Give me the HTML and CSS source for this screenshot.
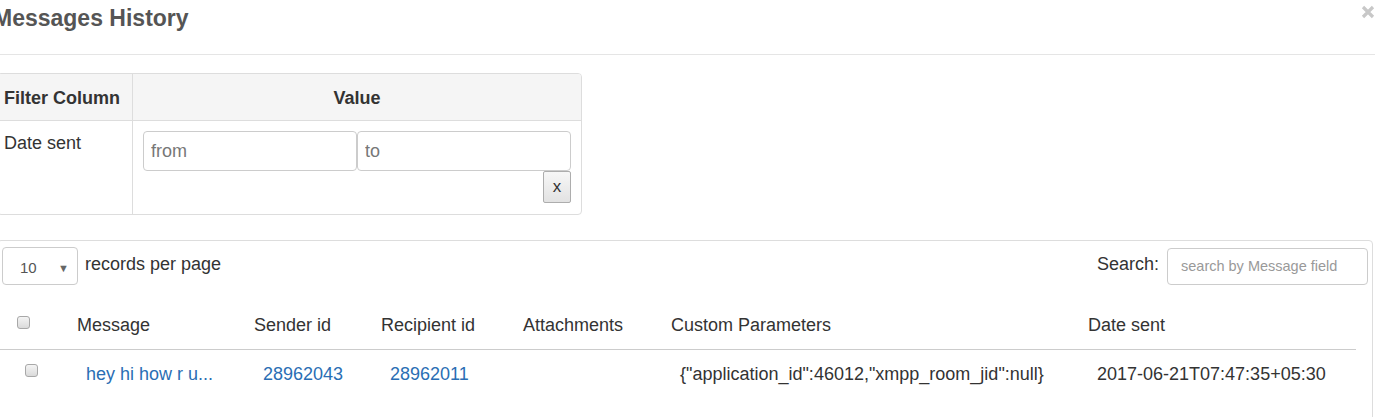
FILE: index.html
```html
<!DOCTYPE html>
<html>
<head>
<meta charset="utf-8">
<title>Messages History</title>
<link rel="stylesheet" href="styles.css">
</head>
<body>
<div class="modal">
  <div class="modal-header">
    <h4 class="modal-title">Messages History</h4>
    <button class="close" aria-label="Close"><svg width="14" height="14" viewBox="0 0 14 14"><path d="M2 2 L12 12 M12 2 L2 12" stroke="#c8c8c8" stroke-width="3.2" stroke-linecap="butt"/></svg></button>
  </div>
  <div class="modal-body">
    <div class="filter">
      <div class="frow fhead">
        <div class="fc c1">Filter Column</div>
        <div class="fc c2 center">Value</div>
      </div>
      <div class="frow fbody">
        <div class="fc c1 label">Date sent</div>
        <div class="fc c2 controls">
          <div class="inputs">
            <input class="finput" type="text" placeholder="from">
            <input class="finput" type="text" placeholder="to">
          </div>
          <div class="btnrow"><button class="xbtn">x</button></div>
        </div>
      </div>
    </div>

    <div class="panel">
      <div class="toolbar">
        <div class="length">
          <div class="select"><span class="sval">10</span><span class="sarrow">▼</span></div>
          <span class="ltext">records per page</span>
        </div>
        <div class="search">
          <span class="stext">Search:</span>
          <input class="sinput" type="text" placeholder="search by Message field">
        </div>
      </div>
      <div class="table">
        <div class="trow thead">
          <div class="cell cbcell"><span class="cb"></span></div>
          <div class="cell">Message</div>
          <div class="cell">Sender id</div>
          <div class="cell">Recipient id</div>
          <div class="cell">Attachments</div>
          <div class="cell">Custom Parameters</div>
          <div class="cell">Date sent</div>
        </div>
        <div class="trow tbody">
          <div class="cell cbcell"><span class="cb"></span></div>
          <div class="cell"><a class="link" href="#">hey hi how r u...</a></div>
          <div class="cell"><a class="link" href="#">28962043</a></div>
          <div class="cell"><a class="link" href="#">28962011</a></div>
          <div class="cell"></div>
          <div class="cell">{"application_id":46012,"xmpp_room_jid":null}</div>
          <div class="cell">2017-06-21T07:47:35+05:30</div>
        </div>
      </div>
    </div>
  </div>
</div>
</body>
</html>
```
FILE: styles.css
```css
* { box-sizing: border-box; }
html, body { margin: 0; padding: 0; overflow: hidden; background: #fff; }
body {
  font-family: "Liberation Sans", Arial, sans-serif;
  font-size: 18px;
  color: #333;
  width: 1375px;
  height: 417px;
}
.modal {
  position: relative;
  margin-left: -18px;
  width: 1405px;
}
.modal-header {
  position: relative;
  height: 55px;
  padding: 6px 15px 0 11px;
  border-bottom: 1px solid #e5e5e5;
}
.modal-title {
  margin: 0;
  font-size: 23px;
  line-height: 25px;
  font-weight: bold;
  color: #555;
}
.close {
  position: absolute;
  top: 5px;
  left: 1379px;
  width: 14px;
  height: 14px;
  padding: 0;
  border: 0;
  background: transparent;
  display: block;
}
.close svg { display: block; }
.modal-body {
  padding: 18px 15px 0 15px;
}
.filter {
  width: 585px;
  border: 1px solid #ddd;
  border-radius: 4px;
  overflow: hidden;
}
.frow { display: flex; }
.fhead {
  height: 47px;
  background: #f5f5f5;
  border-bottom: 1px solid #ddd;
  font-weight: bold;
  align-items: stretch;
}
.fc { line-height: 22px; }
.c1 { width: 135px; border-right: 1px solid #ddd; padding-left: 6px; }
.c2 { flex: 1; }
.fhead .fc { display: flex; align-items: center; padding-top: 1px; }
.fhead .center { justify-content: center; }
.fbody { height: 93px; }
.label { padding-top: 11px; }
.controls { padding: 10px 10px 0 10px; }
.inputs { display: flex; }
.finput {
  width: 214px;
  height: 40px;
  border: 1px solid #ccc;
  border-radius: 4px;
  padding: 0 7px;
  font-family: "Liberation Sans", Arial, sans-serif;
  font-size: 18px;
  color: #555;
  outline: none;
}
.finput::placeholder { color: #777; }
.btnrow { display: flex; justify-content: flex-end; }
.xbtn {
  width: 28px;
  height: 32px;
  padding: 0;
  border: 1px solid #adadad;
  border-radius: 2px;
  background: linear-gradient(#f7f7f7, #e2e2e2);
  font-family: "Liberation Sans", Arial, sans-serif;
  font-size: 17px;
  color: #333;
  line-height: 28px;
}
.panel {
  margin-top: 25px;
  width: 1376px;
  height: 200px;
  border: 1px solid #ddd;
  border-radius: 4px;
  padding: 6px 4px 0 4px;
}
.toolbar {
  display: flex;
  justify-content: space-between;
  align-items: center;
  height: 38px;
}
.length { display: flex; align-items: center; }
.select {
  width: 76px;
  height: 38px;
  border: 1px solid #ccc;
  border-radius: 4px;
  display: flex;
  align-items: center;
  justify-content: space-between;
  padding: 3px 8px 0 17px;
  font-size: 15px;
  color: #555;
}
.sarrow { font-size: 11px; color: #666; }
.ltext { margin-left: 7px; margin-top: -4px; }
.search { display: flex; align-items: center; }
.stext { margin-right: 8px; margin-top: -4px; }
.sinput {
  width: 201px;
  height: 37px;
  border: 1px solid #ccc;
  border-radius: 4px;
  padding: 0 13px;
  font-family: "Liberation Sans", Arial, sans-serif;
  font-size: 14.5px;
  outline: none;
}
.sinput::placeholder { color: #999; }
.table { margin-left: -2px; width: 1356px; }
.trow {
  display: grid;
  grid-template-columns: 69px 177px 127px 142px 148px 417px 276px;
}
.thead {
  height: 65px;
  border-bottom: 1px solid #ccc;
  align-items: end;
}
.cell { line-height: 22px; white-space: nowrap; }
.thead .cell { padding: 0 0 13px 8px; }
.tbody .cell { padding: 13px 0 0 17px; }
.thead .cbcell { padding: 0 0 20px 17px; line-height: 0; }
.tbody .cbcell { padding: 14px 0 0 25px; line-height: 0; }
.cb {
  display: inline-block;
  width: 13px;
  height: 13px;
  border: 1px solid #a8a8a8;
  border-radius: 3px;
  background: linear-gradient(#f4f4f4, #dadada);
}
.link { color: #2a6eb4; text-decoration: none; }
```
